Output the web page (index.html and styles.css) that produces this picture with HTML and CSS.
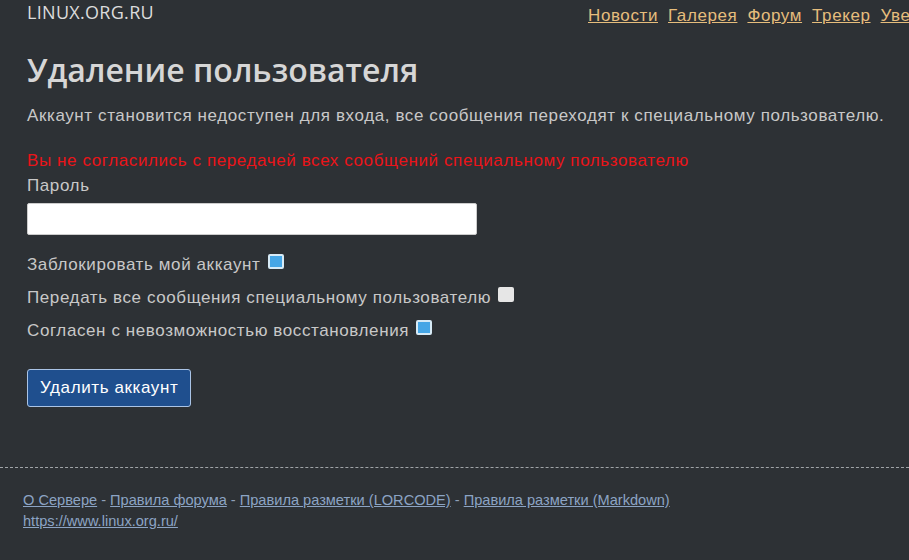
FILE: index.html
```html
<!DOCTYPE html>
<html lang="ru">
<head>
    <meta charset="UTF-8">
    <meta name="viewport" content="width=device-width, initial-scale=1.0">
    <title>Удаление пользователя - LINUX.ORG.RU</title>
    <link rel="stylesheet" href="styles.css">
</head>
<body>
    <header class="topbar">
        <a class="logo" href="#">LINUX.ORG.RU</a>
        <nav class="menu">
            <a href="#">Новости</a>
            <a href="#">Галерея</a>
            <a href="#">Форум</a>
            <a href="#">Трекер</a>
            <a href="#">Уведомления</a>
        </nav>
    </header>

    <main class="content">
        <h1>Удаление пользователя</h1>
        <p class="intro">Аккаунт становится недоступен для входа, все сообщения переходят к специальному пользователю.</p>

        <form class="remove-form" action="#" method="post">
            <div class="error">Вы не согласились с передачей всех сообщений специальному пользователю</div>
            <label class="field-label" for="password">Пароль</label>
            <input type="password" id="password" class="text-input">

            <div class="checks">
                <label class="check">Заблокировать мой аккаунт <input type="checkbox" checked></label>
                <label class="check">Передать все сообщения специальному пользователю <input type="checkbox"></label>
                <label class="check">Согласен с невозможностью восстановления <input type="checkbox" checked></label>
            </div>

            <button type="submit" class="btn">Удалить аккаунт</button>
        </form>
    </main>

    <footer class="footer">
        <div class="footer-links">
            <a href="#">О Сервере</a> - <a href="#">Правила форума</a> - <a href="#">Правила разметки (LORCODE)</a> - <a href="#">Правила разметки (Markdown)</a>
        </div>
        <div><a href="#">https://www.linux.org.ru/</a></div>
    </footer>
</body>
</html>
```

FILE: styles.css
```css
html, body {
    overflow: hidden;
}
body {
    margin: 0;
    background-color: #2d3135;
    color: #c8c8c8;
    font-family: "Liberation Sans", Arial, sans-serif;
    font-size: 17px;
    letter-spacing: 0.6px;
    line-height: 19px;
}
a {
    color: inherit;
}
.topbar {
    display: flex;
    padding-left: 27px;
    height: 40px;
    white-space: nowrap;
}
.logo {
    flex: 0 0 561px;
    font-family: "Open Sans", sans-serif;
    font-size: 18px;
    letter-spacing: 0.3px;
    line-height: 24px;
    color: #dcdcdc;
    text-decoration: none;
}
.menu {
    margin-top: 6px;
    display: flex;
    gap: 10px;
}
.menu a {
    color: #e6bd7c;
}
.content {
    padding: 0 27px;
}
h1 {
    font-family: "Open Sans", sans-serif;
    font-weight: 600;
    font-size: 32px;
    letter-spacing: 0;
    color: #d6d6d6;
    margin: 10px 0 0;
    line-height: 40px;
}
.intro {
    margin: 16px 0 0;
    white-space: nowrap;
}
.remove-form {
    margin-top: 26px;
}
.error {
    color: #ea1419;
}
.field-label {
    display: block;
    margin-top: 6px;
}
.text-input {
    display: block;
    box-sizing: border-box;
    width: 450px;
    height: 32px;
    margin-top: 8px;
    border: 1px solid #ccc;
    border-radius: 2px;
    background: #fff;
}
.checks {
    margin-top: 13px;
}
.check {
    display: block;
    line-height: 33px;
}
.check input {
    appearance: none;
    -webkit-appearance: none;
    width: 16px;
    height: 15px;
    margin: 0 0 0 2px;
    vertical-align: 1px;
    box-sizing: border-box;
    border: 2px solid #e6e6e6;
    background: #e6e6e6;
    border-radius: 2px;
}
.check input:checked {
    border-color: #d6eaf6;
    background: #45a6e6;
}
.btn {
    margin-top: 22px;
    padding: 0 12px;
    height: 38px;
    background: #1f4f8e;
    color: #fff;
    border: 1px solid #aac4e6;
    border-radius: 3px;
    font-family: "Liberation Sans", Arial, sans-serif;
    font-size: 17px;
    letter-spacing: 0.6px;
    cursor: pointer;
}
.footer {
    margin-top: 60px;
    border-top: 1px dashed #a0a4a8;
    padding: 22px 23px;
    font-size: 14.6px;
    letter-spacing: 0;
    line-height: 21px;
    color: #8fa0b8;
}
.footer a {
    color: #8ca4c4;
}
```
